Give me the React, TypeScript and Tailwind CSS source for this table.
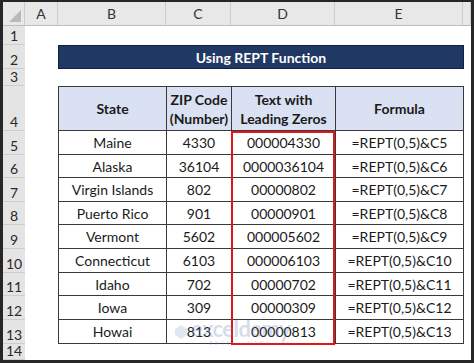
import React from "react";

const COLS = ["A", "B", "C", "D", "E", ""];
const COL_W = ["w-[33px]", "w-[108px]", "w-[65px]", "w-[104px]", "w-[128px]", "w-[8px]"];

const ROWS = [
  { state: "Maine", zip: "4330", text: "000004330", f: "=REPT(0,5)&C5", h: "h-[24px]" },
  { state: "Alaska", zip: "36104", text: "0000036104", f: "=REPT(0,5)&C6", h: "h-[23px]" },
  { state: "Virgin Islands", zip: "802", text: "00000802", f: "=REPT(0,5)&C7", h: "h-[24px]" },
  { state: "Puerto Rico", zip: "901", text: "00000901", f: "=REPT(0,5)&C8", h: "h-[23px]" },
  { state: "Vermont", zip: "5602", text: "000005602", f: "=REPT(0,5)&C9", h: "h-[24px]" },
  { state: "Connecticut", zip: "6103", text: "000006103", f: "=REPT(0,5)&C10", h: "h-[24px]" },
  { state: "Idaho", zip: "702", text: "00000702", f: "=REPT(0,5)&C11", h: "h-[23px]" },
  { state: "Iowa", zip: "309", text: "00000309", f: "=REPT(0,5)&C12", h: "h-[24px]" },
  { state: "Howai", zip: "813", text: "00000813", f: "=REPT(0,5)&C13", h: "h-[24px]" },
];

function RowNum({ n, h }: { n: number; h: string }) {
  return (
    <div className={`${h} w-[22px] shrink-0 flex items-end justify-center pb-[1px] bg-[#e4e4e4] border-b border-[#cdcdcd] text-[14px] leading-none text-[#2a2a2a]`}>
      {n}
    </div>
  );
}

export default function App() {
  return (
    <div
      className="relative w-[474px] h-[363px] overflow-hidden bg-[#262626] pt-[2px] pl-[3px] pr-[3px] pb-[3px]"
      style={{ fontFamily: "Lato, 'Liberation Sans', sans-serif" }}
    >
      <div className="relative flex flex-col w-[468px] h-[358px] bg-white overflow-hidden">
        {/* column headers */}
        <div className="flex h-[24px] bg-[#e8e8e8] border-b border-[#bdbdbd]">
          <div className="relative w-[22px] shrink-0 border-r border-[#cdcdcd]">
            <div className="absolute right-[3px] bottom-[3px] w-0 h-0 border-l-[12px] border-l-transparent border-b-[12px] border-b-[#b9b9b9]" />
          </div>
          {COLS.map((c, i) => (
            <div
              key={i}
              className={`${COL_W[i]} shrink-0 flex items-center justify-center border-r border-[#cdcdcd] text-[14px] text-[#333]`}
            >
              {c}
            </div>
          ))}
        </div>

        {/* row 1 */}
        <div className="flex h-[19px]">
          <RowNum n={1} h="h-[19px]" />
        </div>

        {/* row 2: title */}
        <div className="flex h-[24px]">
          <RowNum n={2} h="h-[24px]" />
          <div className="w-[33px] shrink-0" />
          <div className="w-[406px] shrink-0 flex items-center justify-center bg-[#1f3864] border border-[#10213f] text-white font-bold text-[14px]">
            Using REPT Function
          </div>
        </div>

        {/* row 3 */}
        <div className="flex h-[17px]">
          <RowNum n={3} h="h-[17px]" />
        </div>

        {/* row 4: table header */}
        <div className="flex h-[45px]">
          <RowNum n={4} h="h-[45px]" />
          <div className="w-[33px] shrink-0" />
          <div className="flex bg-[#d9e1f2] border-t border-l border-[#3a3a3a] font-bold text-[14px] leading-[19px] text-[#1a1a1a]">
            <div className="w-[108px] border-r border-b border-[#3a3a3a] flex items-center justify-center">State</div>
            <div className="w-[65px] border-r border-b border-[#3a3a3a] flex flex-col items-center justify-center">
              <span>ZIP Code</span>
              <span>(Number)</span>
            </div>
            <div className="w-[104px] border-r border-b border-[#3a3a3a] flex flex-col items-center justify-center">
              <span>Text with</span>
              <span>Leading Zeros</span>
            </div>
            <div className="w-[128px] border-r border-b border-[#3a3a3a] flex items-center justify-center">Formula</div>
          </div>
        </div>

        {/* data rows */}
        {ROWS.map((r, i) => (
          <div key={i} className={`flex ${r.h}`}>
            <RowNum n={i + 5} h={r.h} />
            <div className="w-[33px] shrink-0" />
            <div className="flex border-l border-[#3a3a3a] text-[14px] text-[#1a1a1a]">
              <div className="w-[108px] border-r border-b border-[#3a3a3a] flex items-center justify-center">{r.state}</div>
              <div className="w-[65px] border-r border-b border-[#3a3a3a] flex items-center justify-center">{r.zip}</div>
              <div className="w-[104px] border-r border-b border-[#3a3a3a] flex items-center justify-center">{r.text}</div>
              <div className="w-[128px] border-r border-b border-[#3a3a3a] flex items-center justify-center">{r.f}</div>
            </div>
          </div>
        ))}

        {/* row 14 */}
        <div className="flex h-[16px]">
          <RowNum n={14} h="h-[16px]" />
        </div>

        {/* red highlight around D5:D13 */}
        <div className="pointer-events-none absolute left-[228px] top-[129px] w-[104px] h-[214px] border-2 border-[#e0161b]" />

        {/* faint watermark */}
        <div className="pointer-events-none absolute left-[170px] top-[316px] flex items-center gap-[2px] opacity-25 text-[#5b7bb0]">
          <svg width="16" height="16" viewBox="0 0 16 16">
            <path d="M8 1 L14 5 L14 11 L8 15 L2 11 L2 5 Z" fill="#8aa3cc" />
          </svg>
          <div className="flex flex-col leading-none">
            <span className="text-[22px] font-bold tracking-tight">exceldemy</span>
            <span className="text-[6px] tracking-[2px] pl-[18px]">EXCEL · DATA · BI</span>
          </div>
        </div>
      </div>
    </div>
  );
}
